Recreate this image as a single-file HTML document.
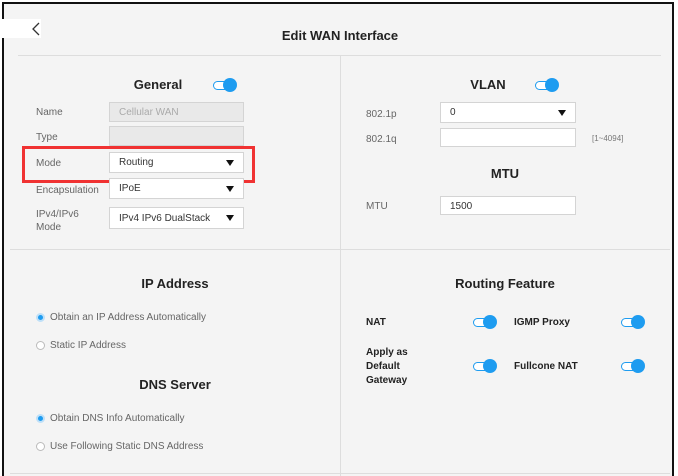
<!DOCTYPE html>
<html style="width:678px;height:476px;overflow:hidden"><head><meta charset="utf-8"><style>
*{margin:0;padding:0;box-sizing:border-box}
body{width:678px;height:476px;background:#fff;position:relative;overflow:hidden;font-family:"Liberation Sans",sans-serif}
#frame{position:absolute;left:2px;top:2px;width:672px;height:474px;border:2px solid #111;border-bottom:none;background:#f4f4f4}
.a{position:absolute}
.t{position:absolute;white-space:nowrap}
.lbl{font-size:10px;color:#666;margin-top:2px}
.h{font-size:13px;font-weight:bold;color:#222;transform:translateX(-50%)}
.in{position:absolute;border:1px solid #d4d4d4;background:#fff;font-size:10px;color:#333;padding-left:9px;line-height:20px}
.dis{background:#e9e9e9;color:#aaa}
.arr{position:absolute;right:9px;top:7px;width:0;height:0;border-left:4px solid transparent;border-right:4px solid transparent;border-top:6px solid #111}
.tg{position:absolute;width:24px;height:14px}
.tg i{position:absolute;left:0;top:3px;width:19px;height:9px;border:1.5px solid #1e9cf0;border-radius:5px;background:#fff}
.tg b{position:absolute;left:10px;top:0;width:14px;height:14px;border-radius:50%;background:#1e9cf0}
.rd{position:absolute;width:9px;height:9px;border-radius:50%;border:1px solid #bbb;background:#fff}
.rd.on{border:2px solid #bfe0f8;background:#1e9cf0}
.bold{font-size:10px;font-weight:bold;color:#222;margin-top:2px}
</style></head><body>
<div id="frame"></div>
<div class="a" style="left:0;top:19px;width:41px;height:19px;background:#fff"></div>
<svg class="a" style="left:31px;top:22px" width="10" height="14"><path d="M8 1 L2 7 L8 13" fill="none" stroke="#333" stroke-width="1.3"/></svg>
<div class="t h" style="left:340px;top:28px">Edit WAN Interface</div>
<div class="a" style="left:18px;top:55px;width:643px;height:1px;background:#ddd"></div>
<div class="a" style="left:340px;top:55px;width:1px;height:421px;background:#ddd"></div>
<div class="a" style="left:10px;top:249px;width:660px;height:1px;background:#ddd"></div>
<div class="a" style="left:10px;top:473px;width:660px;height:1px;background:#ddd"></div>

<div class="t h" style="left:158px;top:77px">General</div>
<div class="tg" style="left:213px;top:78px"><i></i><b></b></div>
<div class="t lbl" style="left:36px;top:105px">Name</div>
<div class="in dis" style="left:109px;top:102px;width:135px;height:20px">Cellular WAN</div>
<div class="t lbl" style="left:36px;top:130px">Type</div>
<div class="in dis" style="left:109px;top:126px;width:135px;height:20px"></div>
<div class="t lbl" style="left:36px;top:156px">Mode</div>
<div class="in" style="left:109px;top:152px;width:135px;height:21px">Routing<span class="arr"></span></div>
<div class="a" style="left:22px;top:146px;width:233px;height:37px;border:3px solid #f03232"></div>
<div class="t lbl" style="left:36px;top:183px">Encapsulation</div>
<div class="in" style="left:109px;top:178px;width:135px;height:21px">IPoE<span class="arr"></span></div>
<div class="t lbl" style="left:36px;top:206px;line-height:13px">IPv4/IPv6<br>Mode</div>
<div class="in" style="left:109px;top:207px;width:135px;height:22px;line-height:21px">IPv4 IPv6 DualStack<span class="arr"></span></div>

<div class="t h" style="left:488px;top:77px">VLAN</div>
<div class="tg" style="left:535px;top:78px"><i></i><b></b></div>
<div class="t lbl" style="left:366px;top:107px">802.1p</div>
<div class="in" style="left:440px;top:102px;width:136px;height:21px">0<span class="arr"></span></div>
<div class="t lbl" style="left:366px;top:132px">802.1q</div>
<div class="in" style="left:440px;top:128px;width:136px;height:19px"></div>
<div class="t" style="left:592px;top:134px;font-size:8px;color:#777">[1~4094]</div>
<div class="t h" style="left:505px;top:166px">MTU</div>
<div class="t lbl" style="left:366px;top:199px">MTU</div>
<div class="in" style="left:440px;top:196px;width:136px;height:19px;line-height:20px">1500</div>

<div class="t h" style="left:175px;top:276px">IP Address</div>
<div class="rd on" style="left:36px;top:313px"></div>
<div class="t lbl" style="left:50px;top:310px">Obtain an IP Address Automatically</div>
<div class="rd" style="left:36px;top:341px"></div>
<div class="t lbl" style="left:50px;top:338px">Static IP Address</div>
<div class="t h" style="left:175px;top:377px">DNS Server</div>
<div class="rd on" style="left:36px;top:414px"></div>
<div class="t lbl" style="left:50px;top:411px">Obtain DNS Info Automatically</div>
<div class="rd" style="left:36px;top:442px"></div>
<div class="t lbl" style="left:50px;top:439px">Use Following Static DNS Address</div>

<div class="t h" style="left:505px;top:276px">Routing Feature</div>
<div class="t bold" style="left:366px;top:315px">NAT</div>
<div class="tg" style="left:473px;top:315px"><i></i><b></b></div>
<div class="t bold" style="left:514px;top:315px">IGMP Proxy</div>
<div class="tg" style="left:621px;top:315px"><i></i><b></b></div>
<div class="t bold" style="left:366px;top:344px;line-height:14px">Apply as<br>Default<br>Gateway</div>
<div class="tg" style="left:473px;top:359px"><i></i><b></b></div>
<div class="t bold" style="left:514px;top:359px">Fullcone NAT</div>
<div class="tg" style="left:621px;top:359px"><i></i><b></b></div>
</body></html>
